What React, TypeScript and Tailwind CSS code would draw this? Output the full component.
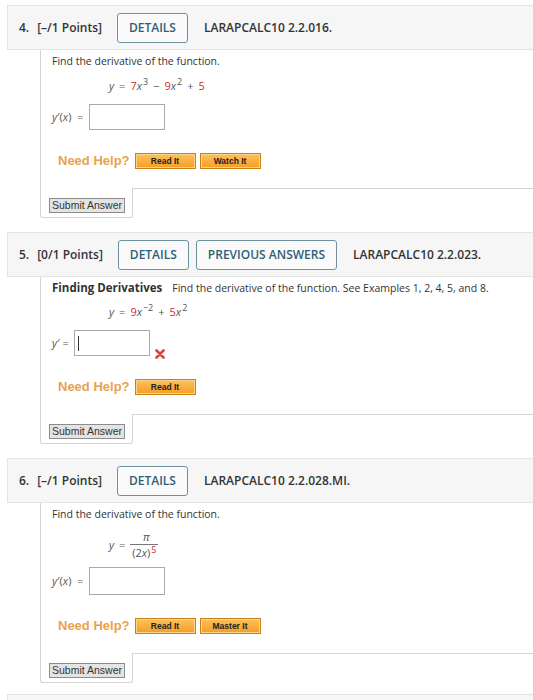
import React from 'react';

const RED = 'text-[#c9302c]';

function Header({ num, points, buttons, code }: { num: string; points: string; buttons: string[]; code: string }) {
  return (
    <div className="ml-[7px] flex h-[45px] items-center border border-r-0 border-[#e4e4e4] bg-[#f6f6f6] pl-[11px] font-['Open_Sans',sans-serif] text-[12px] font-semibold text-[#333]">
      <span>{num}</span>
      <span className="ml-[8px]">{points}</span>
      <div className="ml-[15px] flex gap-[7px]">
        {buttons.map((b) => (
          <div
            key={b}
            className="flex h-[30px] items-center rounded-[3px] border border-[#6e919f] bg-[#fafafa] px-[11px] text-[#2f5f78]"
          >
            {b}
          </div>
        ))}
      </div>
      <span className="ml-[16px]">{code}</span>
    </div>
  );
}

function HelpButton({ label }: { label: string }) {
  return (
    <div className="flex h-[16px] w-[61px] items-center justify-center border border-[#c98216] bg-gradient-to-b from-[#fcc25a] to-[#f59c22] font-['Liberation_Sans',Arial,sans-serif] text-[8.5px] font-bold text-[#222] shadow-[inset_0_0_0_1px_#fdd58a]">
      {label}
    </div>
  );
}

function Footer() {
  return (
    <div className="ml-[40px] flex">
      <div className="h-[30px] w-[93px] rounded-b-[3px] border border-t-0 border-[#d4d4d4] pl-[8px] pt-[10px]">
        <div className="flex h-[15px] w-[76px] items-center justify-center border border-[#8c8c8c] bg-[#e4e4e4] font-['Liberation_Sans',Arial,sans-serif] text-[10.5px] text-[#333]">
          Submit Answer
        </div>
      </div>
      <div className="flex-1 border-t border-[#d4d4d4]" />
    </div>
  );
}

function Question({
  num,
  points,
  buttons,
  code,
  children,
  help,
}: {
  num: string;
  points: string;
  buttons: string[];
  code: string;
  children: React.ReactNode;
  help: string[];
}) {
  return (
    <div>
      <Header num={num} points={points} buttons={buttons} code={code} />
      <div className="ml-[40px] border-l border-[#d4d4d4] pb-[19px] pl-[11px] pt-[4px] font-['Open_Sans',sans-serif] text-[10.5px] leading-[14px] text-[#333]">
        {children}
        <div className="mt-[23px] flex items-center">
          <span className="ml-[6px] mr-[5px] font-['Liberation_Sans',Arial,sans-serif] text-[13px] font-bold text-[#e9a24c]">
            Need Help?
          </span>
          <div className="flex gap-[4px]">
            {help.map((h) => (
              <HelpButton key={h} label={h} />
            ))}
          </div>
        </div>
      </div>
      <Footer />
    </div>
  );
}

function Sup({ children, red, top = 'top-[-5px]' }: { children: React.ReactNode; red?: boolean; top?: string }) {
  return <span className={`relative ${top} ml-px text-[9px] ${red ? RED : ''}`}>{children}</span>;
}

function Op({ children }: { children: React.ReactNode }) {
  return <span className="mx-[5px]">{children}</span>;
}

function AnswerRow({
  label,
  width = 76,
  cursor,
  mt = 'mt-[10px]',
  gap = 'mr-[6px]',
  h = 'h-[26px]',
}: {
  label: React.ReactNode;
  width?: number;
  cursor?: boolean;
  mt?: string;
  gap?: string;
  h?: string;
}) {
  return (
    <div className={`${mt} flex items-center`}>
      <span className={`${gap} text-[11px] text-[#555]`}>{label}</span>
      <div className={`flex ${h} items-center border border-[#a9a9a9] bg-white pl-[3px]`} style={{ width }}>
        {cursor && <div className="h-[15px] w-px bg-[#333]" />}
      </div>
    </div>
  );
}

export default function App() {
  return (
    <div className="min-h-[700px] bg-white pt-[5px]">
      <Question num="4." points="[–/1 Points]" buttons={['DETAILS']} code="LARAPCALC10 2.2.016." help={['Read It', 'Watch It']}>
        <div>Find the derivative of the function.</div>
        <div className="ml-[57px] mt-[11px] text-[11px] text-[#555]">
          <i>y</i>
          <Op>=</Op>
          <span className={RED}>7</span>
          <i>x</i>
          <Sup>3</Sup>
          <Op>−</Op>
          <span className={RED}>9</span>
          <i>x</i>
          <Sup>2</Sup>
          <Op>+</Op>
          <span className={RED}>5</span>
        </div>
        <AnswerRow
          label={
            <>
              <i>y</i>′(<i>x</i>)&nbsp; =
            </>
          }
        />
      </Question>

      <div className="mt-[14px]">
        <Question
          num="5."
          points="[0/1 Points]"
          buttons={['DETAILS', 'PREVIOUS ANSWERS']}
          code="LARAPCALC10 2.2.023."
          help={['Read It']}
        >
          <div>
            <span className="mr-[10px] text-[11.5px] font-bold">Finding Derivatives</span>
            Find the derivative of the function. See Examples 1, 2, 4, 5, and 8.
          </div>
          <div className="ml-[57px] mt-[10px] text-[11px] text-[#555]">
            <i>y</i>
            <Op>=</Op>
            <span className={RED}>9</span>
            <i>x</i>
            <Sup>−2</Sup>
            <Op>+</Op>
            <span className={RED}>5</span>
            <i>x</i>
            <Sup>2</Sup>
          </div>
          <div className="flex items-end">
            <AnswerRow
              label={
                <>
                  <i>y</i>′ =
                </>
              }
              gap="mr-[5px]"
              width={76}
              cursor
            />
            <svg className="mb-[-3px] ml-[5px]" width="10" height="10" viewBox="0 0 10 10">
              <path d="M1.5 1.5 L8.5 8.5 M8.5 1.5 L1.5 8.5" stroke="#e0403a" strokeWidth="2.6" strokeLinecap="round" />
            </svg>
          </div>
        </Question>
      </div>

      <div className="mt-[14px]">
        <Question num="6." points="[–/1 Points]" buttons={['DETAILS']} code="LARAPCALC10 2.2.028.MI." help={['Read It', 'Master It']}>
          <div>Find the derivative of the function.</div>
          <div className="ml-[57px] mt-[9px] flex items-center text-[11px] text-[#555]">
            <span>
              <i>y</i>
              <Op>=</Op>
            </span>
            <div className="flex flex-col items-center">
              <span className="pl-[4px] italic">π</span>
              <div className="h-px w-[28px] bg-[#777]" />
              <span className="mt-[2px] leading-[12px]">
                (2<i>x</i>)<Sup red top="top-[-4px]">5</Sup>
              </span>
            </div>
          </div>
          <AnswerRow
            mt="mt-[7px]"
            h="h-[28px]"
            label={
              <>
                <i>y</i>′(<i>x</i>)&nbsp; =
              </>
            }
          />
        </Question>
      </div>
      <div className="ml-[7px] mt-[11px] h-[20px] border border-r-0 border-[#e4e4e4] bg-[#f6f6f6]" />
    </div>
  );
}
